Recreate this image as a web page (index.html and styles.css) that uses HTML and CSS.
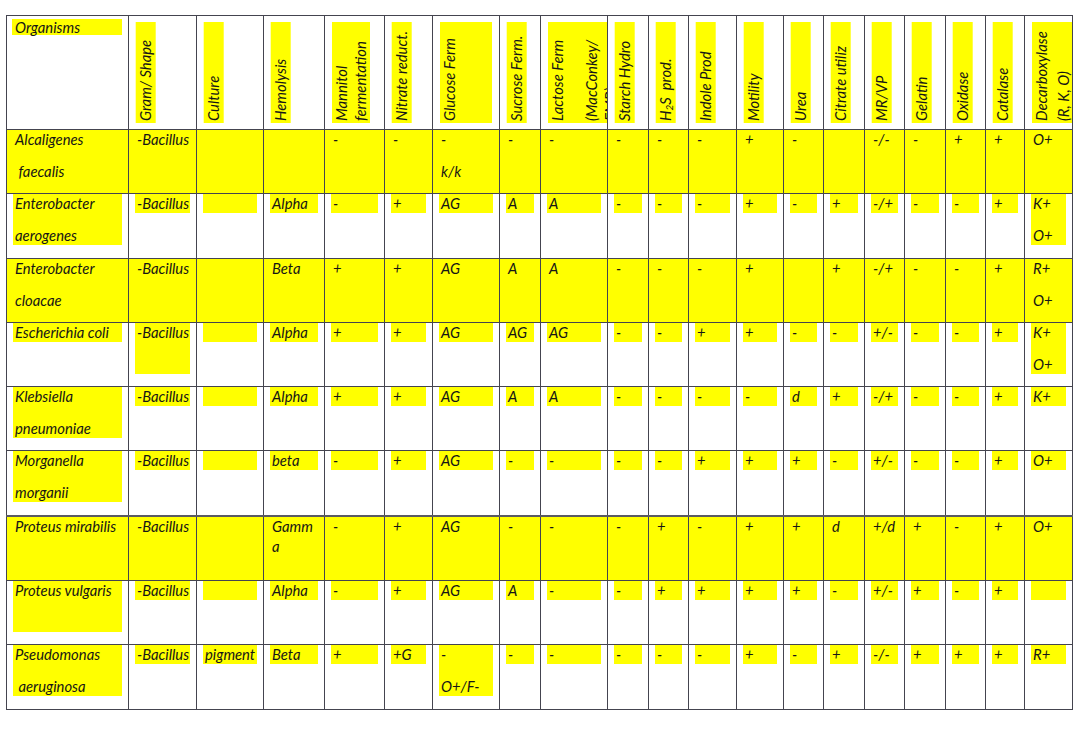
FILE: index.html
```html
<!DOCTYPE html>
<html>
<head>
<meta charset="utf-8">
<link rel="stylesheet" href="styles.css">
</head>
<body>
<table class="grid">
<colgroup>
<col style="width:122px"><col style="width:68px"><col style="width:67px"><col style="width:61px"><col style="width:60px">
<col style="width:48px"><col style="width:67px"><col style="width:41px"><col style="width:67px"><col style="width:41px">
<col style="width:40px"><col style="width:48px"><col style="width:47px"><col style="width:40px"><col style="width:41px">
<col style="width:40px"><col style="width:41px"><col style="width:40px"><col style="width:39px"><col style="width:48px">
</colgroup>
<thead>
<tr class="head">
<th class="org-h"><div class="hsh">Organisms</div></th>
<th><div class="vt">Gram/ Shape</div></th>
<th><div class="vt">Culture</div></th>
<th><div class="vt">Hemolysis</div></th>
<th><div class="vt"><div class="vl">Mannitol</div><div class="vl">fermentation</div></div></th>
<th><div class="vt">Nitrate reduct.</div></th>
<th><div class="vt wide">Glucose Ferm</div></th>
<th><div class="vt">Sucrose Ferm.</div></th>
<th class="clip"><div class="vt"><div class="vl">Lactose Ferm</div><div class="vl gap14">(MacConkey/</div><div class="vl">EMB)</div></div></th>
<th><div class="vt">Starch Hydro</div></th>
<th><div class="vt">H<sub>2</sub>S&nbsp; prod.</div></th>
<th><div class="vt">Indole Prod</div></th>
<th><div class="vt">Motility</div></th>
<th><div class="vt">Urea</div></th>
<th><div class="vt">Citrate utiliz</div></th>
<th><div class="vt">MR/VP</div></th>
<th><div class="vt">Gelatin</div></th>
<th><div class="vt">Oxidase</div></th>
<th><div class="vt">Catalase</div></th>
<th class="clip"><div class="vt"><div class="vl">Decarboxylase</div><div class="vl gap4">(R, K, O)</div></div></th>
</tr>
</thead>
<tbody>
<tr class="yel">
<td><div class="sh"><div class="l">Alcaligenes</div><div class="l">&nbsp;faecalis</div></div></td>
<td><div class="sh"><div class="l">-Bacillus</div></div></td>
<td></td>
<td></td>
<td><div class="sh"><div class="l">-</div></div></td>
<td><div class="sh"><div class="l">-</div></div></td>
<td><div class="sh"><div class="l">-</div><div class="l">k/k</div></div></td>
<td><div class="sh"><div class="l">-</div></div></td>
<td><div class="sh"><div class="l">-</div></div></td>
<td><div class="sh"><div class="l">-</div></div></td>
<td><div class="sh"><div class="l">-</div></div></td>
<td><div class="sh"><div class="l">-</div></div></td>
<td><div class="sh"><div class="l">+</div></div></td>
<td><div class="sh"><div class="l">-</div></div></td>
<td></td>
<td><div class="sh"><div class="l">-/-</div></div></td>
<td><div class="sh"><div class="l">-</div></div></td>
<td><div class="sh"><div class="l">+</div></div></td>
<td><div class="sh"><div class="l">+</div></div></td>
<td><div class="sh"><div class="l">O+</div></div></td>
</tr>
<tr>
<td><div class="sh"><div class="l">Enterobacter</div><div class="l">aerogenes</div></div></td>
<td><div class="sh"><div class="l">-Bacillus</div></div></td>
<td><div class="sh"><div class="l"></div></div></td>
<td><div class="sh"><div class="l">Alpha</div></div></td>
<td><div class="sh"><div class="l">-</div></div></td>
<td><div class="sh"><div class="l">+</div></div></td>
<td><div class="sh"><div class="l">AG</div></div></td>
<td><div class="sh"><div class="l">A</div></div></td>
<td><div class="sh"><div class="l">A</div></div></td>
<td><div class="sh"><div class="l">-</div></div></td>
<td><div class="sh"><div class="l">-</div></div></td>
<td><div class="sh"><div class="l">-</div></div></td>
<td><div class="sh"><div class="l">+</div></div></td>
<td><div class="sh"><div class="l">-</div></div></td>
<td><div class="sh"><div class="l">+</div></div></td>
<td><div class="sh"><div class="l">-/+</div></div></td>
<td><div class="sh"><div class="l">-</div></div></td>
<td><div class="sh"><div class="l">-</div></div></td>
<td><div class="sh"><div class="l">+</div></div></td>
<td><div class="sh"><div class="l">K+</div><div class="l">O+</div></div></td>
</tr>
<tr class="yel">
<td><div class="sh"><div class="l">Enterobacter</div><div class="l">cloacae</div></div></td>
<td><div class="sh"><div class="l">-Bacillus</div></div></td>
<td></td>
<td><div class="sh"><div class="l">Beta</div></div></td>
<td><div class="sh"><div class="l">+</div></div></td>
<td><div class="sh"><div class="l">+</div></div></td>
<td><div class="sh"><div class="l">AG</div></div></td>
<td><div class="sh"><div class="l">A</div></div></td>
<td><div class="sh"><div class="l">A</div></div></td>
<td><div class="sh"><div class="l">-</div></div></td>
<td><div class="sh"><div class="l">-</div></div></td>
<td><div class="sh"><div class="l">-</div></div></td>
<td><div class="sh"><div class="l">+</div></div></td>
<td></td>
<td><div class="sh"><div class="l">+</div></div></td>
<td><div class="sh"><div class="l">-/+</div></div></td>
<td><div class="sh"><div class="l">-</div></div></td>
<td><div class="sh"><div class="l">-</div></div></td>
<td><div class="sh"><div class="l">+</div></div></td>
<td><div class="sh"><div class="l">R+</div><div class="l">O+</div></div></td>
</tr>
<tr>
<td><div class="sh"><div class="l">Escherichia coli</div></div></td>
<td><div class="sh"><div class="l">-Bacillus</div><div class="l"></div></div></td>
<td><div class="sh"><div class="l"></div></div></td>
<td><div class="sh"><div class="l">Alpha</div></div></td>
<td><div class="sh"><div class="l">+</div></div></td>
<td><div class="sh"><div class="l">+</div></div></td>
<td><div class="sh"><div class="l">AG</div></div></td>
<td><div class="sh"><div class="l">AG</div></div></td>
<td><div class="sh"><div class="l">AG</div></div></td>
<td><div class="sh"><div class="l">-</div></div></td>
<td><div class="sh"><div class="l">-</div></div></td>
<td><div class="sh"><div class="l">+</div></div></td>
<td><div class="sh"><div class="l">+</div></div></td>
<td><div class="sh"><div class="l">-</div></div></td>
<td><div class="sh"><div class="l">-</div></div></td>
<td><div class="sh"><div class="l">+/-</div></div></td>
<td><div class="sh"><div class="l">-</div></div></td>
<td><div class="sh"><div class="l">-</div></div></td>
<td><div class="sh"><div class="l">+</div></div></td>
<td><div class="sh"><div class="l">K+</div><div class="l">O+</div></div></td>
</tr>
<tr>
<td><div class="sh"><div class="l">Klebsiella</div><div class="l">pneumoniae</div></div></td>
<td><div class="sh"><div class="l">-Bacillus</div></div></td>
<td><div class="sh"><div class="l"></div></div></td>
<td><div class="sh"><div class="l">Alpha</div></div></td>
<td><div class="sh"><div class="l">+</div></div></td>
<td><div class="sh"><div class="l">+</div></div></td>
<td><div class="sh"><div class="l">AG</div></div></td>
<td><div class="sh"><div class="l">A</div></div></td>
<td><div class="sh"><div class="l">A</div></div></td>
<td><div class="sh"><div class="l">-</div></div></td>
<td><div class="sh"><div class="l">-</div></div></td>
<td><div class="sh"><div class="l">-</div></div></td>
<td><div class="sh"><div class="l">-</div></div></td>
<td><div class="sh"><div class="l">d</div></div></td>
<td><div class="sh"><div class="l">+</div></div></td>
<td><div class="sh"><div class="l">-/+</div></div></td>
<td><div class="sh"><div class="l">-</div></div></td>
<td><div class="sh"><div class="l">-</div></div></td>
<td><div class="sh"><div class="l">+</div></div></td>
<td><div class="sh"><div class="l">K+</div></div></td>
</tr>
<tr>
<td><div class="sh"><div class="l">Morganella</div><div class="l">morganii</div></div></td>
<td><div class="sh"><div class="l">-Bacillus</div></div></td>
<td><div class="sh"><div class="l"></div></div></td>
<td><div class="sh"><div class="l">beta</div></div></td>
<td><div class="sh"><div class="l">-</div></div></td>
<td><div class="sh"><div class="l">+</div></div></td>
<td><div class="sh"><div class="l">AG</div></div></td>
<td><div class="sh"><div class="l">-</div></div></td>
<td><div class="sh"><div class="l">-</div></div></td>
<td><div class="sh"><div class="l">-</div></div></td>
<td><div class="sh"><div class="l">-</div></div></td>
<td><div class="sh"><div class="l">+</div></div></td>
<td><div class="sh"><div class="l">+</div></div></td>
<td><div class="sh"><div class="l">+</div></div></td>
<td><div class="sh"><div class="l">-</div></div></td>
<td><div class="sh"><div class="l">+/-</div></div></td>
<td><div class="sh"><div class="l">-</div></div></td>
<td><div class="sh"><div class="l">-</div></div></td>
<td><div class="sh"><div class="l">+</div></div></td>
<td><div class="sh"><div class="l">O+</div></div></td>
</tr>
<tr class="yel top-strong">
<td><div class="sh"><div class="l">Proteus mirabilis</div></div></td>
<td><div class="sh"><div class="l">-Bacillus</div></div></td>
<td></td>
<td><div class="sh single"><div class="l">Gamm</div><div class="l">a</div></div></td>
<td><div class="sh"><div class="l">-</div></div></td>
<td><div class="sh"><div class="l">+</div></div></td>
<td><div class="sh"><div class="l">AG</div></div></td>
<td><div class="sh"><div class="l">-</div></div></td>
<td><div class="sh"><div class="l">-</div></div></td>
<td><div class="sh"><div class="l">-</div></div></td>
<td><div class="sh"><div class="l">+</div></div></td>
<td><div class="sh"><div class="l">-</div></div></td>
<td><div class="sh"><div class="l">+</div></div></td>
<td><div class="sh"><div class="l">+</div></div></td>
<td><div class="sh"><div class="l">d</div></div></td>
<td><div class="sh"><div class="l">+/d</div></div></td>
<td><div class="sh"><div class="l">+</div></div></td>
<td><div class="sh"><div class="l">-</div></div></td>
<td><div class="sh"><div class="l">+</div></div></td>
<td><div class="sh"><div class="l">O+</div></div></td>
</tr>
<tr>
<td><div class="sh"><div class="l">Proteus vulgaris</div><div class="l"></div></div></td>
<td><div class="sh"><div class="l">-Bacillus</div></div></td>
<td><div class="sh"><div class="l"></div></div></td>
<td><div class="sh"><div class="l">Alpha</div></div></td>
<td><div class="sh"><div class="l">-</div></div></td>
<td><div class="sh"><div class="l">+</div></div></td>
<td><div class="sh"><div class="l">AG</div></div></td>
<td><div class="sh"><div class="l">A</div></div></td>
<td><div class="sh"><div class="l">-</div></div></td>
<td><div class="sh"><div class="l">-</div></div></td>
<td><div class="sh"><div class="l">+</div></div></td>
<td><div class="sh"><div class="l">+</div></div></td>
<td><div class="sh"><div class="l">+</div></div></td>
<td><div class="sh"><div class="l">+</div></div></td>
<td><div class="sh"><div class="l">-</div></div></td>
<td><div class="sh"><div class="l">+/-</div></div></td>
<td><div class="sh"><div class="l">+</div></div></td>
<td><div class="sh"><div class="l">-</div></div></td>
<td><div class="sh"><div class="l">+</div></div></td>
<td><div class="sh"><div class="l"></div></div></td>
</tr>
<tr>
<td><div class="sh"><div class="l">Pseudomonas</div><div class="l">&nbsp;aeruginosa</div></div></td>
<td><div class="sh"><div class="l">-Bacillus</div></div></td>
<td><div class="sh"><div class="l">pigment</div></div></td>
<td><div class="sh"><div class="l">Beta</div></div></td>
<td><div class="sh"><div class="l">+</div></div></td>
<td><div class="sh"><div class="l">+G</div></div></td>
<td><div class="sh"><div class="l">-</div><div class="l">O+/F-</div></div></td>
<td><div class="sh"><div class="l">-</div></div></td>
<td><div class="sh"><div class="l">-</div></div></td>
<td><div class="sh"><div class="l">-</div></div></td>
<td><div class="sh"><div class="l">-</div></div></td>
<td><div class="sh"><div class="l">-</div></div></td>
<td><div class="sh"><div class="l">+</div></div></td>
<td><div class="sh"><div class="l">-</div></div></td>
<td><div class="sh"><div class="l">+</div></div></td>
<td><div class="sh"><div class="l">-/-</div></div></td>
<td><div class="sh"><div class="l">+</div></div></td>
<td><div class="sh"><div class="l">+</div></div></td>
<td><div class="sh"><div class="l">+</div></div></td>
<td><div class="sh"><div class="l">R+</div></div></td>
</tr>
</tbody>
</table>
</body>
</html>
```
FILE: styles.css
```css
html, body {
  margin: 0;
  padding: 0;
  background: #ffffff;
}
body {
  font-family: "Lato", "Open Sans", sans-serif;
  font-style: italic;
  font-size: 14.8px;
  color: #161616;
}
.grid {
  margin: 15px 0 0 6px;
  border-collapse: collapse;
  table-layout: fixed;
  width: 1066px;
}
.grid th, .grid td {
  border: 1px solid #44444f;
  padding: 0 6px 0 6px;
  vertical-align: top;
  text-align: left;
  font-weight: normal;
}
.head th {
  height: 107px;
  padding: 6px 0 0 7px;
}
.head th.org-h {
  padding: 3px 6px 0 5px;
}
.head th.clip {
  overflow: hidden;
}
.hsh {
  background: #ffff00;
  height: 16px;
  line-height: 16px;
  padding-left: 3px;
  white-space: nowrap;
}
.vt {
  writing-mode: vertical-rl;
  transform: rotate(180deg);
  height: 101px;
  box-sizing: border-box;
  padding-top: 2px;
  background: #ffff00;
  line-height: 19.7px;
  font-size: 14.8px;
  white-space: nowrap;
}
.vt .vl {
  line-height: 19px;
}
.vt .vl.gap14 {
  padding-block-start: 15px;
}
.vt .vl.gap4 {
  padding-block-start: 3px;
}
.vt.wide {
  width: 52px;
}
.vt sub {
  font-size: 10px;
  line-height: 0;
}
tbody td {
  height: 63.3px;
}
tr.yel td {
  background: #ffff00;
}
tr.top-strong td {
  border-top: 2px solid #5a5a62;
}
.sh {
  background: #ffff00;
  padding-left: 2px;
}
.sh .l {
  height: 19px;
  line-height: 19px;
  white-space: nowrap;
}
.sh .l + .l {
  box-sizing: border-box;
  height: 32px;
  padding-top: 13px;
}
.sh.single .l + .l {
  height: 20px;
  padding-top: 1px;
}
```
